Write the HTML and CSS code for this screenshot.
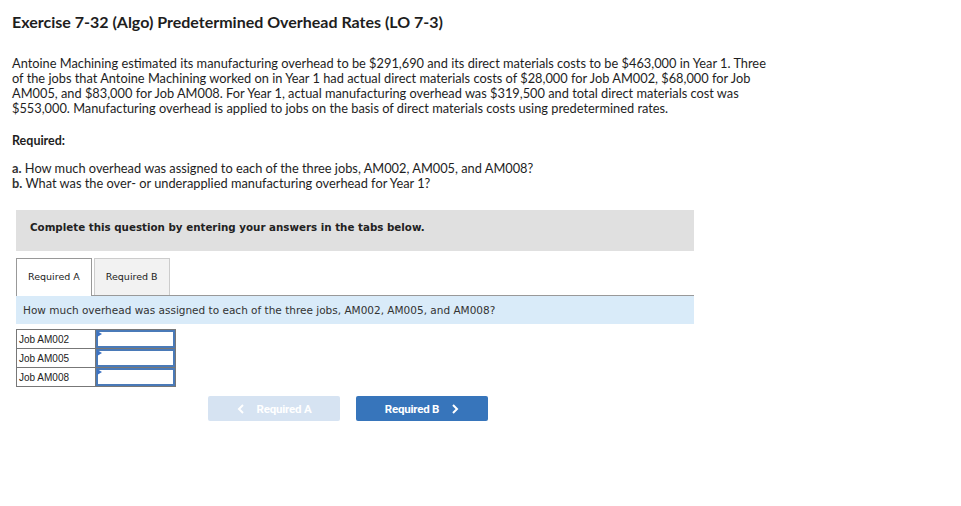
FILE: index.html
```html
<!DOCTYPE html>
<html>

<head>
  <meta charset="UTF-8">
  <link rel="stylesheet" href="styles.css">
</head>

<body>
  <h2 class="title">Exercise 7-32 (Algo) Predetermined Overhead Rates (LO 7-3)</h2>

  <p class="intro">Antoine Machining estimated its manufacturing overhead to be $291,690 and its direct materials costs to be $463,000 in Year 1. Three of the jobs that Antoine Machining worked on in Year 1 had actual direct materials costs of $28,000 for Job AM002, $68,000 for Job AM005, and $83,000 for Job AM008. For Year 1, actual manufacturing overhead was $319,500 and total direct materials cost was $553,000. Manufacturing overhead is applied to jobs on the basis of direct materials costs using predetermined rates.</p>

  <p class="req-label">Required:</p>

  <ul class="req-list">
    <li><b>a.</b> How much overhead was assigned to each of the three jobs, AM002, AM005, and AM008?</li>
    <li><b>b.</b> What was the over- or underapplied manufacturing overhead for Year 1?</li>
  </ul>

  <div class="question">
    <div class="notice">Complete this question by entering your answers in the tabs below.</div>

    <div class="tabs">
      <div class="tab active">Required A</div>
      <div class="tab">Required B</div>
    </div>

    <div class="prompt">How much overhead was assigned to each of the three jobs, AM002, AM005, and AM008?</div>

    <table class="answer-table">
      <tr>
        <td class="job">Job AM002</td>
        <td class="cell"><input type="text"></td>
      </tr>
      <tr>
        <td class="job">Job AM005</td>
        <td class="cell"><input type="text"></td>
      </tr>
      <tr>
        <td class="job">Job AM008</td>
        <td class="cell"><input type="text"></td>
      </tr>
    </table>

    <div class="nav">
      <button class="nav-btn disabled">
        <svg class="chev left" viewBox="0 0 8 12"><polyline points="6,2 2,6 6,10" /></svg>
        Required A
      </button>
      <button class="nav-btn">
        Required B
        <svg class="chev right" viewBox="0 0 8 12"><polyline points="2,2 6,6 2,10" /></svg>
      </button>
    </div>
  </div>
</body>

</html>
```

FILE: styles.css
```css
body {
  margin: 0;
  padding: 0 12px;
  font-family: 'Lato', 'Liberation Sans', sans-serif;
  color: #1e1e1e;
  background: white;
}

.title {
  margin: 13px 0 0 0;
  font-size: 16px;
  font-weight: bold;
  color: #1e1e1e;
  line-height: 18px;
}

.intro {
  margin: 25px 0 0 0;
  max-width: 758px;
  font-size: 12.8px;
  line-height: 15px;
}

.req-label {
  margin: 17px 0 0 0;
  font-size: 12.5px;
  font-weight: bold;
  line-height: 15px;
}

.req-list {
  list-style: none;
  margin: 13px 0 0 0;
  padding: 0;
  font-size: 12.8px;
  line-height: 15px;
}

.req-list b {
  color: #333;
}

/* question panel */
.question {
  width: 678px;
  margin: 19px 0 0 4px;
}

.notice {
  background: #e0e0e0;
  height: 41px;
  line-height: 35px;
  padding-left: 14px;
  font-family: 'DejaVu Sans', Verdana, sans-serif;
  font-size: 10.3px;
  font-weight: bold;
  color: #222;
}

.tabs {
  display: flex;
  gap: 2px;
  margin-top: 7px;
  border-bottom: 1px solid #999;
}

.tab {
  height: 36px;
  line-height: 36px;
  padding: 0 11px;
  font-family: 'DejaVu Sans', Verdana, sans-serif;
  font-size: 9.5px;
  color: #222;
  background: #f2f2f2;
  border: 1px solid #ccc;
  border-bottom: none;
}

.tab.active {
  background: white;
  border-color: #999;
  margin-bottom: -1px;
  height: 37px;
}

.prompt {
  background: #d9ebf9;
  height: 28px;
  line-height: 28px;
  padding-left: 7px;
  font-family: 'DejaVu Sans', Verdana, sans-serif;
  font-size: 10.5px;
  color: #333;
}

.answer-table {
  margin-top: 5px;
  border-collapse: collapse;
}

.answer-table td {
  border: 1px solid #777;
  padding: 0;
  height: 18px;
}

.job {
  width: 76px;
  padding-left: 2px !important;
  font-family: 'Liberation Sans', Arial, sans-serif;
  font-size: 10px;
  color: #222;
}

.cell {
  position: relative;
  width: 79px;
}

.cell input {
  display: block;
  box-sizing: border-box;
  width: 79px;
  height: 18px;
  margin: 0;
  border: 2px solid #4a7ab8;
  outline: none;
}

.cell::before {
  content: "";
  position: absolute;
  top: 1px;
  left: 1px;
  border-left: 5px solid #3d72c2;
  border-top: 3px solid transparent;
  border-bottom: 3px solid transparent;
}

.nav {
  display: flex;
  gap: 16px;
  margin: 9px 0 0 192px;
}

.nav-btn {
  display: flex;
  align-items: center;
  justify-content: center;
  gap: 12px;
  width: 132px;
  height: 25px;
  border: none;
  border-radius: 2px;
  background: #3775bb;
  color: white;
  font-family: 'Roboto', 'Liberation Sans', sans-serif;
  font-size: 11.5px;
  font-weight: bold;
  letter-spacing: -0.2px;
  cursor: pointer;
}

.nav-btn.disabled {
  background: #d6e3f2;
}

.chev {
  width: 8px;
  height: 12px;
}

.chev polyline {
  fill: none;
  stroke: white;
  stroke-width: 2;
}
```
